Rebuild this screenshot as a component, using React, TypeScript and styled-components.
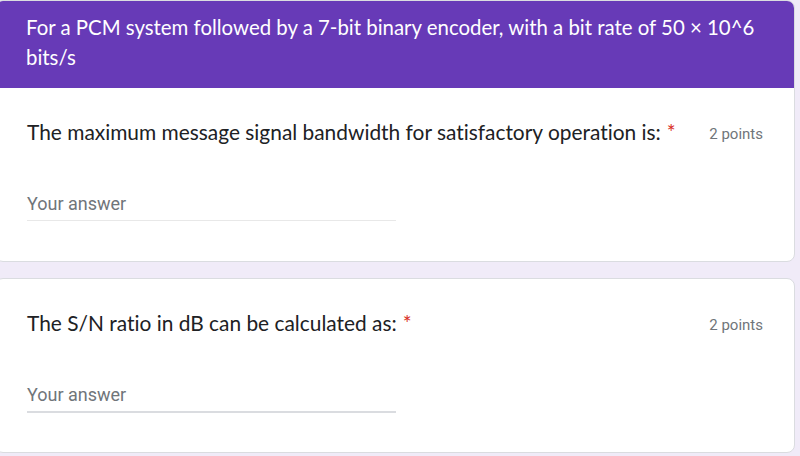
import React from "react";
import styled, { createGlobalStyle } from "styled-components";

const Global = createGlobalStyle`
  html, body { margin: 0; padding: 0; background: #f0ebf8; }
  body { width: 800px; height: 456px; overflow: hidden; font-variant-ligatures: none; }
`;

const Column = styled.div`
  width: 800px;
  margin-left: -5px;
  display: flex;
  flex-direction: column;
  gap: 16px;
`;

const Card = styled.div`
  background: #fff;
  border: 1px solid #dadce0;
  border-radius: 8px;
  overflow: hidden;
`;

const Header = styled.div`
  background: #673ab7;
  height: 88px;
  box-sizing: border-box;
  padding: 12px 30px 0 31px;
  margin: -1px -1px 0 -1px;
  color: #fff;
  font-family: Lato, "Open Sans", sans-serif;
  font-size: 20.4px;
  line-height: 30px;
`;

const Body = styled.div`
  height: 173px;
  box-sizing: border-box;
  padding: 28px 31px 0 31px;
  display: flex;
  flex-direction: column;
`;

const TitleRow = styled.div`
  display: flex;
  align-items: center;
  justify-content: space-between;
`;

const Title = styled.div`
  font-family: Lato, "Open Sans", sans-serif;
  font-size: 20.9px;
  line-height: 32px;
  color: #202124;
`;

const Star = styled.span`
  color: #d93025;
  margin-left: 6px;
`;

const Points = styled.div`
  font-family: Roboto, sans-serif;
  font-size: 15px;
  color: #70757a;
  margin-top: 3px;
  margin-right: 0;
`;

const Answer = styled.div<{ $active?: boolean }>`
  margin-top: 44px;
  width: 369px;
  font-family: Roboto, sans-serif;
  font-size: 18px;
  line-height: 24px;
  color: #70757a;
  padding-bottom: 4px;
  border-bottom: ${(p) => (p.$active ? "2px solid #dadce0" : "1px solid #e8e8e8")};
`;

function Question({ text, active }: { text: string; active?: boolean }) {
  return (
    <Body>
      <TitleRow>
        <Title>
          {text}
          <Star>*</Star>
        </Title>
        <Points>2 points</Points>
      </TitleRow>
      <Answer $active={active}>Your answer</Answer>
    </Body>
  );
}

export default function App() {
  return (
    <>
      <Global />
      <Column>
        <Card>
          <Header>
            For a PCM system followed by a 7-bit binary encoder, with a bit rate of 50 × 10^6 bits/s
          </Header>
          <Question text="The maximum message signal bandwidth for satisfactory operation is:" />
        </Card>
        <Card>
          <Question text="The S/N ratio in dB can be calculated as:" active />
        </Card>
      </Column>
    </>
  );
}
